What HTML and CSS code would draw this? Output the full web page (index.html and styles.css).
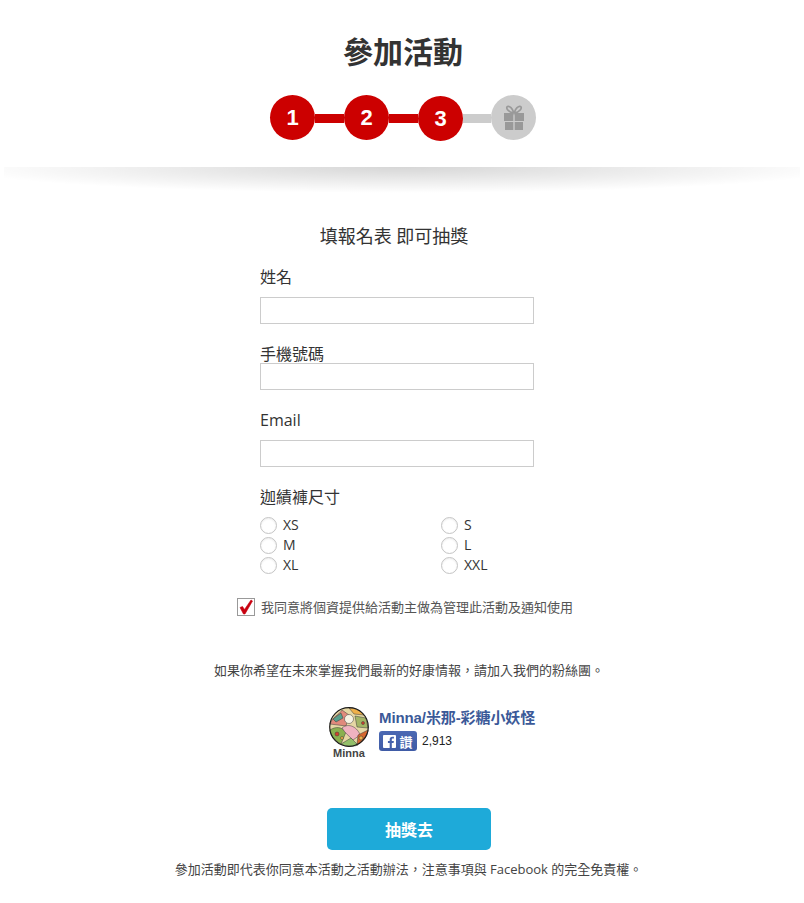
FILE: index.html
```html
<!DOCTYPE html>
<html lang="zh-Hant">

<head>
    <meta charset="UTF-8" />
    <meta name="viewport" content="width=device-width, initial-scale=1.0" />
    <title>參加活動</title>
    <link rel="stylesheet" href="styles.css">
</head>

<body>
    <header class="top">
        <h1>參加活動</h1>
        <div class="steps">
            <span class="step done">1</span>
            <span class="line done"></span>
            <span class="step done">2</span>
            <span class="line done"></span>
            <span class="step done low">3</span>
            <span class="line last"></span>
            <span class="step gift">
                <svg width="20" height="25" viewBox="0 0 20 25">
                    <path d="M10 8C8.500 3.500 5.500 0.500 3.500 1.500C1.500 2.500 3.500 7 10 8C16.500 7 18.500 2.500 16.500 1.500C14.500 0.500 11.500 3.500 10 8Z" fill="none" stroke="#999" stroke-width="1.700" />
                    <rect x="0" y="8" width="9.300" height="8" fill="#999" />
                    <rect x="10.700" y="8" width="9.300" height="8" fill="#999" />
                    <rect x="1" y="17" width="8.300" height="8" fill="#999" />
                    <rect x="10.700" y="17" width="8.300" height="8" fill="#999" />
                </svg>
            </span>
        </div>
    </header>

    <main class="content">
        <form class="form">
            <h2 class="form-title">填報名表 即可抽獎</h2>

            <label class="field-label first">姓名</label>
            <input class="text-input" type="text" />

            <label class="field-label tight">手機號碼</label>
            <input class="text-input" type="text" />

            <label class="field-label">Email</label>
            <input class="text-input" type="text" />

            <label class="field-label">迦績褲尺寸</label>
            <div class="sizes">
                <label class="size"><i class="radio"></i>XS</label>
                <label class="size"><i class="radio"></i>S</label>
                <label class="size"><i class="radio"></i>M</label>
                <label class="size"><i class="radio"></i>L</label>
                <label class="size"><i class="radio"></i>XL</label>
                <label class="size"><i class="radio"></i>XXL</label>
            </div>

            <label class="agree">
                <span class="checkbox">
                    <svg width="14" height="16" viewBox="0 0 14 16">
                        <path d="M1 8.500L3.500 7.500L5.500 10.500L12 1L13.500 2L6 15H4.500Z" fill="#c8000f" stroke="#c8000f" stroke-width="0.600" stroke-linejoin="round" />
                    </svg>
                </span>
                我同意將個資提供給活動主做為管理此活動及通知使用
            </label>
        </form>

        <p class="fans-note">如果你希望在未來掌握我們最新的好康情報，請加入我們的粉絲團。</p>

        <div class="fanpage">
            <div class="avatar">
                <svg width="40" height="40" viewBox="0 0 40 40">
                    <circle cx="20" cy="20" r="19.500" fill="#e6d7a4" />
                    <g stroke="#3a3a3a" stroke-width="0.500">
                        <path d="M1 17C4 9 10 8 13 3L20 8L17 19Z" fill="#e08a7c" />
                        <path d="M4 12L12 6L14 11L7 15Z" fill="#57a08c" />
                        <path d="M20 1C26 1 31 3 35 8L25 7Z" fill="#eeb04a" />
                        <path d="M26 9L37 11L39 21L28 20Z" fill="#a3b566" />
                        <path d="M1 23C7 19 13 20 17 25L12 37C6 34 2 29 1 23Z" fill="#8ab04f" />
                        <path d="M13 21C20 15 29 21 31 28L24 33C20 29 16 26 13 21Z" fill="#f0b3c0" />
                        <path d="M12 37L22 31L29 38C24 40 17 40 12 37Z" fill="#93bf6a" />
                        <path d="M29 28L39 23C38 30 34 35 28 38Z" fill="#d5672f" />
                        <circle cx="20" cy="12" r="4.500" fill="#f8f3e4" />
                        <circle cx="8" cy="27" r="2" fill="#d3402c" />
                        <circle cx="13" cy="31" r="1.500" fill="#eeb04a" />
                        <circle cx="32" cy="31" r="2" fill="#eeb04a" />
                        <circle cx="34" cy="16" r="1.500" fill="#d3402c" />
                    </g>
                    <circle cx="20" cy="20" r="19.300" fill="none" stroke="#1c1c1c" stroke-width="1.200" />
                </svg>
                <span class="avatar-name">Minna</span>
            </div>
            <div class="fan-info">
                <a class="fan-name">Minna/米那-彩糖小妖怪</a>
                <div class="fan-like">
                    <span class="like-btn">
                        <svg width="13" height="13" viewBox="0 0 14 14">
                            <path d="M1 0H13A1 1 0 0 1 14 1V13A1 1 0 0 1 13 14H9.500V8.500H11.400L11.700 6.400H9.500V5C9.500 4.300 9.800 3.900 10.600 3.900H11.800V2C11.300 2 10.700 1.900 10 1.900C8.300 1.900 7.200 2.900 7.200 4.800V6.400H5.300V8.500H7.200V14H1A1 1 0 0 1 0 13V1A1 1 0 0 1 1 0Z" fill="#fff" />
                        </svg>
                        讚
                    </span>
                    <span class="like-count">2,913</span>
                </div>
            </div>
        </div>

        <button class="submit" type="button">抽獎去</button>
        <p class="terms">參加活動即代表你同意本活動之活動辦法，注意事項與 Facebook 的完全免責權。</p>
    </main>
</body>

</html>
```

FILE: styles.css
```css
* {
    box-sizing: border-box;
}

body {
    margin: 0;
    background: #fff;
    color: #333;
    font-family: "Open Sans", "Noto Sans CJK TC", sans-serif;
}

.top {
    position: relative;
    height: 167px;
    padding-top: 30px;
    text-align: center;
    background: #fff;
}

/* soft shadow under the header, fades at both ends */
.top::after {
    content: "";
    position: absolute;
    left: 4px;
    right: 4px;
    top: 167px;
    height: 26px;
    background: radial-gradient(ellipse 56% 100% at 50% 0, rgba(0, 0, 0, 0.16), rgba(0, 0, 0, 0) 100%);
}

h1 {
    margin: 0;
    height: 44px;
    padding-left: 2px;
    font-size: 30px;
    line-height: 44px;
    font-weight: 700;
    color: #333;
}

.steps {
    display: flex;
    justify-content: center;
    align-items: center;
    margin-top: 20px;
    padding-left: 2px;
}

.step {
    display: flex;
    justify-content: center;
    align-items: center;
    width: 45px;
    height: 45px;
    border-radius: 50%;
    background: #ccc;
    color: #fff;
    font-family: "Liberation Sans", sans-serif;
    font-size: 22px;
    font-weight: 700;
}

.step.done {
    background: #cc0000;
}

.step.low {
    margin-top: 2px;
}

.line {
    width: 29px;
    height: 9px;
    margin-top: 2px;
    background: #ccc;
}

.line.done {
    background: #cc0000;
}

.line.last {
    width: 28px;
}

.content {
    padding-top: 58px;
}

.form {
    width: 274px;
    margin-left: 260px;
}

.form-title {
    margin: 0 0 0 -6px;
    height: 22px;
    font-size: 18px;
    line-height: 22px;
    font-weight: 400;
    text-align: center;
}

.field-label {
    display: block;
    height: 24px;
    margin-top: 18px;
    font-size: 16px;
    line-height: 24px;
}

.field-label.first {
    margin-bottom: 8px;
}

.field-label.tight {
    margin-bottom: -3px;
}

.text-input {
    display: block;
    width: 274px;
    height: 27px;
    border: 1px solid #ccc;
    background: #fff;
    margin-top: 8px;
}

.field-label.first + .text-input,
.field-label.tight + .text-input {
    margin-top: 0;
}

.sizes {
    display: grid;
    grid-template-columns: 181px 93px;
    grid-auto-rows: 20px;
    margin-top: 6px;
}

.size {
    display: flex;
    align-items: center;
    padding-bottom: 2px;
    font-size: 14px;
    color: #333;
}

.radio {
    width: 17px;
    height: 17px;
    margin: 2px 6px 0 0;
    border: 1px solid #c4c4c4;
    border-radius: 50%;
    background: #fff;
    box-shadow: inset 0 1px 2px rgba(0, 0, 0, 0.08);
}

.agree {
    display: flex;
    align-items: center;
    margin: 22px 0 0 -23px;
    width: 340px;
    font-size: 13px;
    color: #555;
    white-space: nowrap;
}

.checkbox {
    display: flex;
    justify-content: center;
    align-items: center;
    width: 18px;
    height: 18px;
    margin-right: 6px;
    border: 1px solid #999;
    background: #fff;
}

.fans-note {
    margin: 45px 0 0 14px;
    text-align: center;
    font-size: 13px;
    line-height: 18px;
    color: #444;
}

.fanpage {
    display: flex;
    margin: 28px 0 0 329px;
}

.avatar {
    display: flex;
    flex-direction: column;
    align-items: center;
    width: 40px;
}

.avatar-name {
    font-family: "Liberation Sans", sans-serif;
    font-size: 11px;
    line-height: 12px;
    font-weight: 700;
    color: #444;
}

.fan-info {
    margin-left: 10px;
}

.fan-name {
    display: block;
    font-family: "Liberation Sans", "Noto Sans CJK TC", sans-serif;
    font-size: 15px;
    line-height: 22px;
    font-weight: 700;
    letter-spacing: -0.1px;
    color: #3b5998;
}

.fan-like {
    display: flex;
    align-items: center;
    margin-top: 2px;
}

.like-btn {
    display: flex;
    align-items: center;
    justify-content: center;
    gap: 3px;
    width: 38px;
    height: 20px;
    border-radius: 3px;
    background: linear-gradient(#4c69b3, #3f5ba6);
    color: #fff;
    font-size: 13px;
    font-weight: 700;
}

.like-count {
    margin-left: 5px;
    font-family: "Liberation Sans", sans-serif;
    font-size: 12px;
    color: #222;
}

.submit {
    display: block;
    width: 164px;
    height: 42px;
    margin: 49px 0 0 327px;
    border: none;
    border-radius: 5px;
    background: #1eaad9;
    color: #fff;
    font-family: inherit;
    font-size: 16px;
    font-weight: 700;
}

.terms {
    margin: 9px 0 0 13px;
    text-align: center;
    font-size: 13px;
    line-height: 20px;
    color: #444;
}
```
